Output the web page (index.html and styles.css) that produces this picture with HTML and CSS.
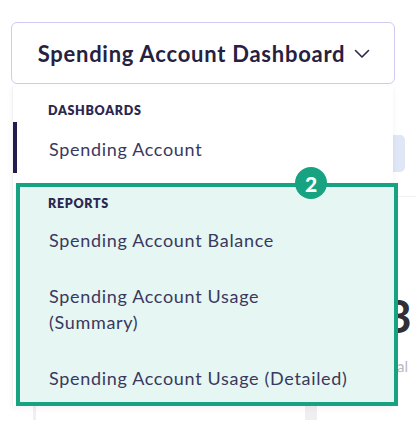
FILE: index.html
```html
<!DOCTYPE html>
<html>
<head>
<meta charset="utf-8">
<link rel="stylesheet" href="styles.css">
</head>
<body>
<div class="page">
  <div class="select">
    <span class="select-label">Spending Account Dashboard</span>
    <svg class="chev" width="16" height="10" viewBox="0 0 16 10"><path d="M1.5 1.5 L8 8 L14.5 1.5" fill="none" stroke="#2b2747" stroke-width="1.6" stroke-linecap="round" stroke-linejoin="round"/></svg>
  </div>
  <div class="bg">
    <div class="bg-left">
      <div class="bg-card"></div>
    </div>
    <div class="bg-right">
      <div class="bg-tab"></div>
      <div class="bg-line"></div>
      <div class="bg-big">3</div>
      <div class="bg-small">al</div>
    </div>
  </div>
  <div class="menu">
    <div class="group">
      <div class="group-title">DASHBOARDS</div>
      <div class="item active">Spending Account</div>
    </div>
    <div class="group reports">
      <div class="badge">2</div>
      <div class="group-title">REPORTS</div>
      <div class="item">Spending Account Balance</div>
      <div class="item">Spending Account Usage<br>(Summary)</div>
      <div class="item last">Spending Account Usage (Detailed)</div>
    </div>
  </div>
</div>
</body>
</html>
```
FILE: styles.css
```css
* { box-sizing: border-box; }
html, body { margin: 0; padding: 0; background: #ffffff; }
body { font-family: Lato, "Noto Sans", sans-serif; }
.page { position: relative; width: 416px; height: 440px; overflow: hidden; padding-top: 22px; }
.select {
  margin-left: 11px; width: 384px; height: 62px;
  border: 1.5px solid #cfcbf2; border-radius: 6px;
  display: flex; align-items: center; justify-content: center; gap: 9px;
  padding-left: 2px;
}
.select-label { font-size: 22px; font-weight: 700; color: #26213f; letter-spacing: 0.75px; }
.chev { margin-top: 1px; }
.bg { display: flex; height: 356px; }
.bg-left { width: 393px; display: flex; flex-direction: column; justify-content: flex-end; padding-bottom: 20px; }
.bg-card { margin-left: 33px; width: 284px; height: 100px; border-left: 3px solid #f0f0f2; border-right: 12px solid #efeff1; }
.bg-right { flex: 1; padding-top: 51px; overflow: hidden; }
.bg-tab { width: 12px; height: 37px; background: #dfe6f6; border-radius: 0 5px 5px 0; }
.bg-line { height: 1px; background: #f1f1f4; margin-top: 24px; }
.bg-big { font-size: 46px; font-weight: 700; color: #2f2f35; line-height: 46px; margin-top: 96px; margin-left: -8px; }
.bg-small { font-size: 15px; color: #b9b9c2; margin-top: 18px; margin-left: 4px; }
.menu {
  position: absolute; left: 12px; top: 86px; width: 381px; height: 320px;
  background: #ffffff; box-shadow: 0 2px 6px rgba(40, 40, 80, 0.06);
  border-left: 1px solid #f3f3f6;
  padding-top: 17px;
}
.group-title { font-size: 12.5px; font-weight: 800; color: #2b2750; letter-spacing: 0.7px; line-height: 16px; padding-left: 35px; }
.item { font-size: 18px; color: #3a385e; line-height: 26px; padding: 15px 0 15px 36px; letter-spacing: 0.68px; }
.item.active { position: relative; margin-top: 3px; padding: 14px 0 11px 36px; }
.item.active::before { content: ""; position: absolute; left: 0; top: 0; bottom: 0; width: 4px; background: #231d4d; }
.reports {
  position: relative; margin-top: 10px; margin-left: 3px; width: 382px;
  border: 4px solid #17a382; background: #e6f6f2; padding-top: 9px;
}
.reports .group-title { padding-left: 28px; }
.reports .item { padding-left: 29px; }
.reports .item.last { padding-bottom: 11px; }
.badge {
  position: absolute; left: 275px; top: -20px; width: 32px; height: 32px; border-radius: 50%;
  background: #17a382; color: #ffffff; font-weight: 900; font-size: 21px;
  display: flex; align-items: center; justify-content: center;
}
```
